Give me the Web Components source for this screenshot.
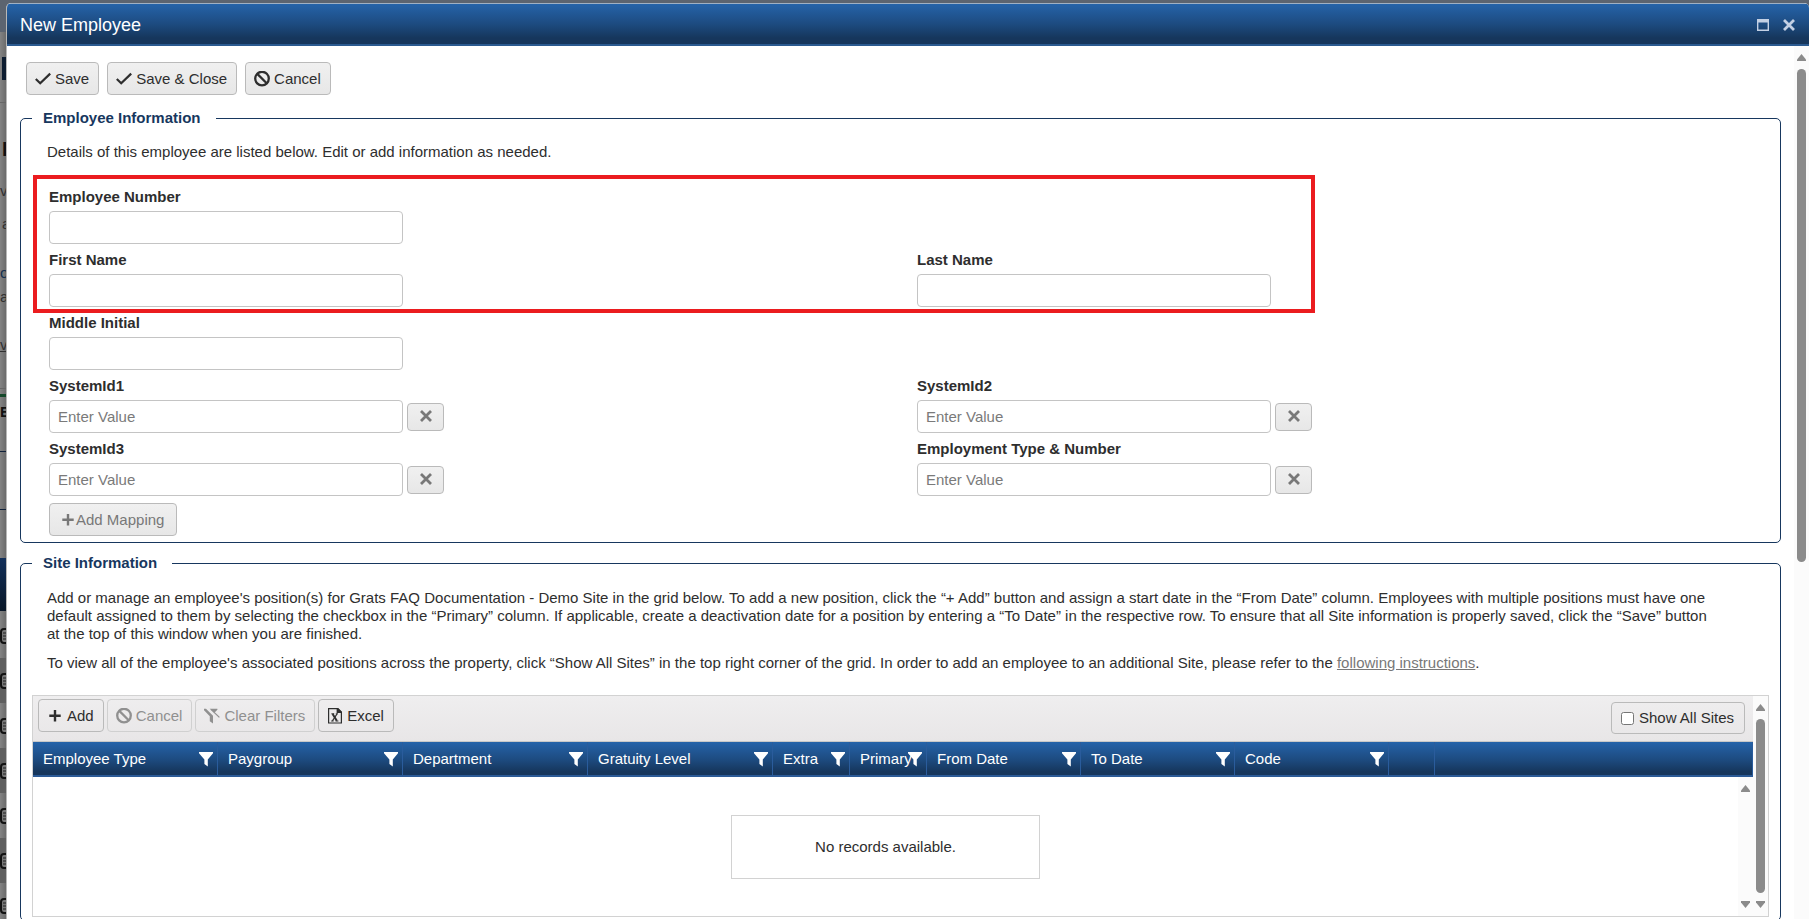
<!DOCTYPE html>
<html lang="en">
<head>
<meta charset="utf-8">
<title>New Employee</title>
<style>
  html, body { height: 100%; margin: 0; overflow: hidden; }
  body {
    font: 15px/18px "Liberation Sans", Arial, sans-serif;
    color: #2e2e2e;
    --navy: #17375e;
    --line: #d2d2d2;
    --bar: linear-gradient(#2563a9, #1d4b80 50%, #16365c 85%);
  }
</style>
</head>
<body>
<employee-page></employee-page>

<script>
const define = (name, html, setup) => {
  const template = document.createElement('template');
  template.innerHTML = html;
  customElements.define(name, class extends HTMLElement {
    constructor() {
      super();
      this.attachShadow({ mode: 'open' }).append(template.content.cloneNode(true));
    }
    connectedCallback() {
      if (setup && !this.ready) { this.ready = true; setup(this, this.shadowRoot); }
    }
  });
};

/* ---------- icons ---------- */
const icons = {
  check: '<path d="M.8 8 5.2 12.2 15.2 2.6" fill="none" stroke="currentColor" stroke-width="2.2"/>',
  ban: '<circle cx="8" cy="7.6" r="6.8" fill="none" stroke="currentColor" stroke-width="2.3"/><path d="M3.3 2.9 12.7 12.3" stroke="currentColor" stroke-width="2.3"/>',
  plus: '<path d="M8 2v11.4M2.3 7.7h11.4" stroke="currentColor" stroke-width="2.4"/>',
  close: '<path d="M3 3 13 13M13 3 3 13" stroke="currentColor" stroke-width="2.8"/>',
  filter: '<path d="M1 1H15V2.2L9.8 8.4V15.6L6.4 13V8.4L1 2.2Z" fill="currentColor"/>',
  unfilter: '<path d="M0 .8H2L9 7.8V15.4L5.8 13.2V8.2L0 2.2Z" fill="currentColor"/><path d="M5.6.8H13.4V1.8L10.4 4.8Z" fill="currentColor"/><path d="M7 1.4 15.4 9.4" stroke="currentColor" stroke-width="1.3"/>',
  excel: '<path d="M1.6.6H11L14.4 4V15H1.6Z" fill="none" stroke="currentColor" stroke-width="1.2"/><path d="M9.6.4V5H14.8V4L11.2.4Z" fill="currentColor"/><path d="M5.6 6 9.8 12.8" stroke="currentColor" stroke-width="2"/><path d="M10 6 5.4 12.8" stroke="currentColor" stroke-width="1.2"/><path d="M4.4 5.8H7.2M8.8 5.8H11M4.2 13H6.6M8.6 13H11.4" stroke="currentColor"/>',
  maximize: '<path d="M2.7 2.7H13.3V13.3H2.7Z" fill="none" stroke="currentColor" stroke-width="1.4"/><path d="M2 2H14V5.6H2Z" fill="currentColor"/>',
  record: '<rect x="1" y="1" width="14" height="14" rx="3" fill="#777" stroke="#111" stroke-width="2"/><path d="M3 5H14M3 8H14M3 11H14" stroke="#222" stroke-width="1.2"/>'
};
define('ui-icon', `
  <style>
    :host { display: inline-flex; flex: none; width: 16px; height: 16px; }
    svg { width: 100%; height: 100%; display: block; }
  </style>
  <svg viewBox="0 0 16 16" aria-hidden="true"></svg>`,
  (el, root) => { root.querySelector('svg').innerHTML = icons[el.getAttribute('name')]; });

/* ---------- tool button ---------- */
define('tool-button', `
  <style>
    :host { display: inline-flex; }
    button {
      display: flex; align-items: center; gap: 4px; height: 33px; padding: 0 9px 0 8px;
      border: 1px solid #bababa; border-radius: 4px; background: linear-gradient(#f0f0f0, #e7e7e7);
      font: inherit; color: #2e2e2e; white-space: nowrap;
    }
    :host([muted]) button { padding: 0 12px 0 10px; gap: 0; color: #787878; }
    :host([off]) button { color: #909090; border-color: #d0d0d0; background: none; }
    :host([flat]) button { background: none; }
    :host([small]) button { width: 37px; height: 28px; padding: 0 0 2px; justify-content: center; gap: 0; color: #787878; }
  </style>
  <button type="button"><span></span><slot></slot></button>`,
  (el, root) => {
    const icon = document.createElement('ui-icon');
    icon.setAttribute('name', el.getAttribute('icon'));
    root.querySelector('span').replaceWith(icon);
    const button = root.querySelector('button');
    button.disabled = el.hasAttribute('off');
    if (el.hasAttribute('hint')) button.setAttribute('aria-label', el.getAttribute('hint'));
  });

/* ---------- scroll bar ---------- */
define('scroll-bar', `
  <style>
    :host { display: flex; flex-direction: column; align-items: center; flex: none; width: 15px; box-sizing: border-box; padding: 8px 0; gap: 8px; background: #fbfbfb; }
    svg { width: 9px; height: 7px; flex: none; display: block; }
    div { flex: 1; width: 9px; border-radius: 5px; background: #8b8b8b; }
    :host([empty]) div { background: none; }
    :host([long]) { padding-bottom: 0; }
    :host([long]) div { flex: 0 0 57%; }
    :host([long]) .down { display: none; }
  </style>
  <svg viewBox="0 0 9 7"><path d="M4.5 0 9 5.5V7H0V5.5Z" fill="#8b8b8b"/></svg>
  <div></div>
  <svg class="down" viewBox="0 0 9 7"><path d="M4.5 7 9 1.5V0H0V1.5Z" fill="#8b8b8b"/></svg>`);

/* ---------- titled section ---------- */
define('form-section', `
  <style>
    :host { display: block; }
    fieldset { min-width: 0; margin: 0; padding: 0 0 6px; border: 1px solid var(--navy); border-radius: 5px; }
    :host([flush]) fieldset { padding-bottom: 3px; }
    legend { margin-left: 11px; padding: 0 15px 0 11px; font-weight: bold; color: var(--navy); }
  </style>
  <fieldset><legend></legend><slot></slot></fieldset>`,
  (el, root) => { root.querySelector('legend').textContent = el.getAttribute('caption'); });

/* ---------- form field ---------- */
define('form-field', `
  <style>
    :host { display: block; }
    label { display: block; margin-bottom: 5px; font-weight: bold; }
    div { display: flex; align-items: center; gap: 4px; }
    input {
      box-sizing: border-box; width: 354px; height: 33px; padding: 0 8px; margin: 0;
      border: 1px solid #c4c4c4; border-radius: 4px; background: #fff; font: inherit; color: inherit;
    }
    input::placeholder { color: #7a7a7a; opacity: 1; }
    :host(:not([clearable])) tool-button { display: none; }
  </style>
  <label for="field"></label>
  <div><input id="field" type="text"><tool-button small icon="close" hint="Remove"></tool-button></div>`,
  (el, root) => {
    root.querySelector('label').textContent = el.getAttribute('label');
    if (el.hasAttribute('clearable')) root.querySelector('input').placeholder = 'Enter Value';
  });

/* ---------- positions grid ---------- */
const columns = [
  ['Employee Type', 185], ['Paygroup', 185], ['Department', 185], ['Gratuity Level', 185],
  ['Extra', 77], ['Primary', 77], ['From Date', 154], ['To Date', 154], ['Code', 154], ['', 46], ['', 0]
];
define('position-grid', `
  <style>
    :host { display: flex; border: 1px solid var(--line); }
    .main { flex: 1; min-width: 0; }
    .tools { display: flex; align-items: flex-start; gap: 3px; height: 46px; box-sizing: border-box; padding: 3px 8px 0 5px; border-bottom: 1px solid #c8c8c8; background: linear-gradient(#efeeef, #e8e6e7); }
    .all { display: flex; align-items: center; gap: 5px; box-sizing: border-box; height: 32px; margin: 3px 0 0 auto; padding: 0 10px 0 9px; border: 1px solid #bababa; border-radius: 4px; }
    .all input { width: 13px; height: 13px; margin: 0; }
    table { width: 100%; table-layout: fixed; border-collapse: separate; border-spacing: 0; }
    thead tr { background: var(--bar); }
    th { box-sizing: border-box; height: 35px; padding: 1px 3px 0 10px; border-right: 1px solid #2a5c9c; border-bottom: 2px solid #2b5a96; font-weight: normal; text-align: left; color: #fff; }
    th div { display: flex; align-items: center; justify-content: space-between; }
    th span { min-width: 0; }
    td { padding: 0; }
    .body { display: flex; height: 139px; }
    .empty { flex: 1; display: flex; align-items: center; justify-content: center; }
    .empty p { margin: 0; padding: 22px 83px; border: 1px solid var(--line); }
  </style>
  <div class="main">
    <div class="tools">
      <tool-button flat icon="plus">Add</tool-button>
      <tool-button off icon="ban">Cancel</tool-button>
      <tool-button off icon="unfilter">Clear Filters</tool-button>
      <tool-button flat icon="excel">Excel</tool-button>
      <label class="all"><input type="checkbox">Show All Sites</label>
    </div>
    <table>
      <colgroup></colgroup>
      <thead><tr></tr></thead>
      <tbody><tr><td colspan="11"><div class="body">
        <div class="empty"><p>No records available.</p></div>
        <scroll-bar empty></scroll-bar>
      </div></td></tr></tbody>
    </table>
  </div>
  <scroll-bar></scroll-bar>`,
  (el, root) => {
    root.querySelector('colgroup').innerHTML = columns.map(c => c[1] ? `<col style="width:${c[1]}px">` : '<col>').join('');
    root.querySelector('thead tr').innerHTML = columns.map(c =>
      `<th scope="col">${c[0] ? `<div><span>${c[0]}</span><ui-icon name="filter"></ui-icon></div>` : ''}</th>`).join('');
  });

/* ---------- dialog window ---------- */
define('dialog-window', `
  <style>
    :host { display: flex; flex-direction: column; box-sizing: border-box; border-left: 1px solid #b8b8b8; border-radius: 5px 5px 0 0; background: #fff; overflow: hidden; }
    header { display: flex; align-items: center; gap: 10px; flex: none; height: 43px; box-sizing: border-box; padding: 1px 12px 0 13px; border-top: 1px solid #9fb0c4; border-bottom: 2px solid #2b5a90; background: var(--bar); color: #fff; }
    h1 { flex: 1; margin: 0; padding-top: 1px; font-size: 18px; font-weight: normal; line-height: 20px; }
    header button { display: flex; padding: 0; border: 0; background: none; color: #c3d0e4; }
    .pane { flex: 1; display: flex; min-height: 0; }
    .content { flex: 1; min-width: 0; padding: 16px 13px 0; }
  </style>
  <header>
    <h1></h1>
    <button type="button" aria-label="Maximize"><ui-icon name="maximize"></ui-icon></button>
    <button type="button" aria-label="Close"><ui-icon name="close"></ui-icon></button>
  </header>
  <div class="pane"><div class="content"><slot></slot></div><scroll-bar long></scroll-bar></div>`,
  (el, root) => { root.querySelector('h1').textContent = el.getAttribute('caption'); });

/* ---------- dimmed page behind the dialog ---------- */
define('dimmed-page', `
  <style>
    :host { display: block; background: linear-gradient(90deg, #838383, #6b6b6b 6px); color: #303030; overflow: hidden; }
    .top { height: 32px; background: #5c6470; }
    .sliver { display: flex; flex-direction: column; width: 6px; overflow: hidden; }
    .tab { height: 23px; margin: 25px 0 22px 2px; background: #0c1c30; }
    .copy { display: flex; flex-direction: column; border-top: 1px solid #666; border-bottom: 1px solid #666; height: 285px; }
    .copy b { margin: 34px 0 21px 2px; font-size: 20px; line-height: 24px; color: #111; }
    .copy .a { margin: 15px 0 31px 2px; }
    .copy .o { margin-bottom: 6px; color: #14304f; }
    .copy .w { margin-top: 30px; text-decoration: underline; }
    .green { height: 3px; margin-top: 5px; background: #14482a; }
    .head { margin-top: 6px; height: 48px; font-weight: bold; color: #111; }
    .block { height: 57px; border-top: 1px solid #10213a; }
    .strip { height: 41px; border-top: 1px solid #10213a; }
    .bar { height: 53px; margin: 7px 0 2px; background: linear-gradient(#12305a, #081627); }
    .row { display: flex; align-items: center; height: 45px; }
    .row:nth-child(even) { background: #5f5f5f; }
  </style>
  <div class="top"></div>
  <div class="sliver">
    <div class="tab"></div>
    <div class="copy"><b>I</b><span>v</span><span class="a">a</span><span class="o">o</span><span>a</span><span class="w">v</span></div>
    <div class="green"></div><div class="head">E</div>
    <div class="block"></div><div class="strip"></div><div class="bar"></div>
  </div>
  <div class="sliver rows"></div>`,
  (el, root) => {
    root.querySelector('.rows').innerHTML = '<div class="row"><ui-icon name="record"></ui-icon></div>'.repeat(7);
  });

/* ---------- page ---------- */
define('employee-page', `
  <style>
    :host { display: grid; height: 100vh; overflow: hidden; }
    dimmed-page, dialog-window { grid-area: 1 / 1; min-height: 0; min-width: 0; }
    dialog-window { margin: 3px 0 0 6px; }
    .tools { display: flex; gap: 8px; padding-left: 6px; margin-bottom: 14px; }
    .text { margin: 16px 64px 11px 26px; }
    .text p { margin: 0 0 11px; }
    .text p:last-child { margin: 0; }
    .pairs { position: relative; display: grid; grid-template-columns: 1fr 1fr; gap: 7px 5px; margin: 0 0 7px 28px; }
    .required::after { content: ""; position: absolute; inset: -13px 465px -6px -16px; border: 4px solid #eb1c1f; pointer-events: none; }
    .wide { grid-column: 1 / -1; }
    .add { display: flex; margin-left: 28px; }
    .first { margin-bottom: 27px; }
    form-section + form-section { margin-top: 11px; }
    position-grid { margin: 23px 11px 0; }
    .site { margin-top: 17px; }
    a { color: #787878; }
  </style>
  <dimmed-page></dimmed-page>
  <dialog-window caption="New Employee" role="dialog">
    <div class="tools">
      <tool-button icon="check">Save</tool-button>
      <tool-button icon="check">Save &amp; Close</tool-button>
      <tool-button icon="ban">Cancel</tool-button>
    </div>
    <form-section caption="Employee Information">
      <div class="text first"><p>Details of this employee are listed below. Edit or add information as needed.</p></div>
      <div class="pairs required">
        <form-field class="wide" label="Employee Number"></form-field>
        <form-field label="First Name"></form-field>
        <form-field label="Last Name"></form-field>
      </div>
      <div class="pairs">
        <form-field class="wide" label="Middle Initial"></form-field>
        <form-field label="SystemId1" clearable></form-field>
        <form-field label="SystemId2" clearable></form-field>
        <form-field label="SystemId3" clearable></form-field>
        <form-field label="Employment Type &amp; Number" clearable></form-field>
      </div>
      <div class="add"><tool-button muted icon="plus">Add Mapping</tool-button></div>
    </form-section>
    <form-section caption="Site Information" flush>
      <div class="text site">
        <p>Add or manage an employee's position(s) for Grats FAQ Documentation - Demo Site in the grid below. To add a new position, click the “+ Add” button and assign a start date in the “From Date” column. Employees with multiple positions must have one default assigned to them by selecting the checkbox in the “Primary” column. If applicable, create a deactivation date for a position by entering a “To Date” in the respective row. To ensure that all Site information is properly saved, click the “Save” button at the top of this window when you are finished.</p>
        <p>To view all of the employee's associated positions across the property, click “Show All Sites” in the top right corner of the grid. In order to add an employee to an additional Site, please refer to the <a href="#instructions">following instructions</a>.</p>
      </div>
      <position-grid></position-grid>
    </form-section>
  </dialog-window>`);
</script>
</body>
</html>
